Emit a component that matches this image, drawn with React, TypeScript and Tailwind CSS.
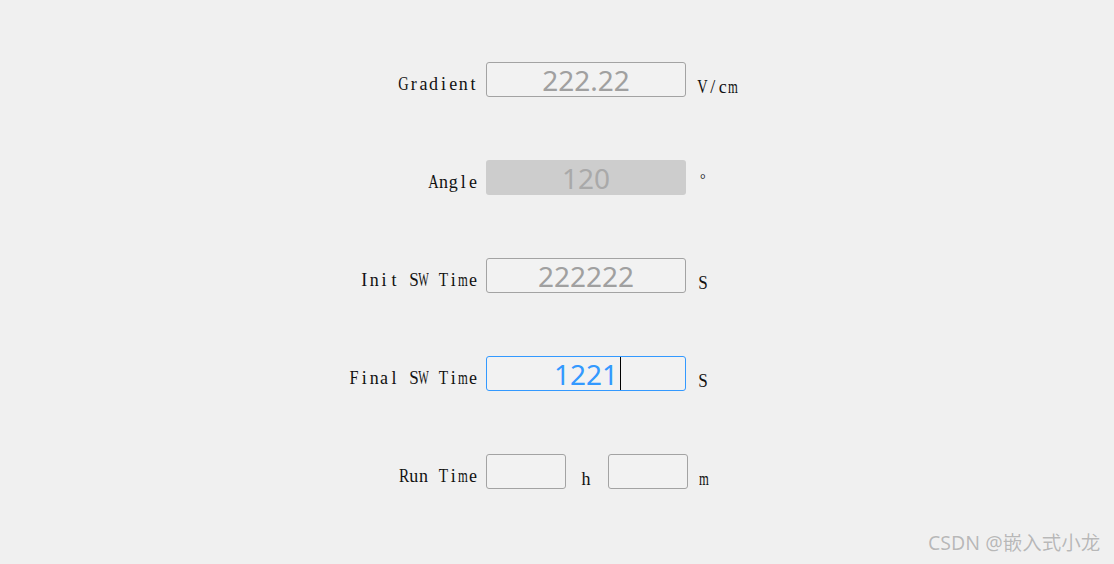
import React from "react";

const serif = { fontFamily: '"Liberation Serif", "DejaVu Serif", serif' };

const narrow: Record<string, string> = {
  W: "scale-x-[0.62]",
  m: "scale-x-[0.7]",
  M: "scale-x-[0.62]",
  T: "scale-x-[0.85]",
  S: "scale-x-[0.95]",
  V: "scale-x-[0.8]",
  G: "scale-x-[0.8]",
  A: "scale-x-[0.8]",
  R: "scale-x-[0.85]",
  F: "scale-x-[0.9]",
};

function Mono({ text }: { text: string }) {
  return (
    <span className="inline-flex">
      {text.split("").map((c, i) => (
        <span key={i} className="inline-flex w-[9.9px] justify-center">
          <span className={"inline-block " + (narrow[c] ?? "")}>{c === " " ? "\u00a0" : c}</span>
        </span>
      ))}
    </span>
  );
}

function Label({ text }: { text: string }) {
  return (
    <div
      className="w-[478px] flex justify-end text-[18px] text-[#111] leading-none whitespace-pre translate-y-[4px]"
      style={serif}
    >
      <Mono text={text} />
    </div>
  );
}

function Unit({ text, cls = "" }: { text: string; cls?: string }) {
  return (
    <div
      className={"text-[18px] text-[#111] leading-none whitespace-pre translate-y-[7px] " + cls}
      style={serif}
    >
      <Mono text={text} />
    </div>
  );
}

function Box({
  value,
  w = "w-[200px]",
  variant = "normal",
}: {
  value?: string;
  w?: string;
  variant?: "normal" | "disabled" | "focus";
}) {
  const base =
    "h-[35px] box-border rounded-[3px] flex items-center justify-center text-[28px] leading-none font-['Noto_Sans',sans-serif] ";
  const styles =
    variant === "disabled"
      ? "bg-[#cdcdcd] text-[#a9a9a9]"
      : variant === "focus"
      ? "bg-[#f2f2f2] border border-[#3399ff] text-[#3399ff]"
      : "bg-[#f2f2f2] border border-[#a3a3a3] text-[#a0a0a0]";
  return (
    <div className={base + styles + " " + w}>
      {value !== undefined && (
        <span className="relative">
          {value}
          {variant === "focus" && (
            <span className="absolute right-[-3px] top-[-3px] w-[1px] h-[33px] bg-black" />
          )}
        </span>
      )}
    </div>
  );
}

export default function App() {
  return (
    <div className="relative w-[1114px] h-[564px] bg-[#f0f0f0] overflow-hidden">
      <div className="flex flex-col gap-[63px] pt-[62px]">
        <div className="flex items-center">
          <Label text="Gradient" />
          <div className="ml-[8px]">
            <Box value="222.22" />
          </div>
          <Unit text="V/cm" cls="ml-[12px]" />
        </div>
        <div className="flex items-center">
          <Label text="Angle" />
          <div className="ml-[8px]">
            <Box value="120" variant="disabled" />
          </div>
          <div className="ml-[14px] text-[14px] text-[#111] leading-none translate-y-[2px]" style={serif}>
            °
          </div>
        </div>
        <div className="flex items-center">
          <Label text="Init SW Time" />
          <div className="ml-[8px]">
            <Box value="222222" />
          </div>
          <Unit text="S" cls="ml-[12px]" />
        </div>
        <div className="flex items-center">
          <Label text="Final SW Time" />
          <div className="ml-[8px]">
            <Box value="1221" variant="focus" />
          </div>
          <Unit text="S" cls="ml-[12px]" />
        </div>
        <div className="flex items-center">
          <Label text="Run Time" />
          <div className="ml-[8px]">
            <Box w="w-[80px]" />
          </div>
          <Unit text="h" cls="ml-[15px]" />
          <div className="ml-[17px]">
            <Box w="w-[80px]" />
          </div>
          <Unit text="m" cls="ml-[11px]" />
        </div>
      </div>
      <div
        className="absolute left-[928px] top-[533px] text-[19.5px] leading-none font-normal text-[#b8b8b8] whitespace-nowrap"
        style={{
          fontFamily: '"Noto Sans", "Noto Sans CJK SC", sans-serif',
          textShadow: "0 0 1px #ffffff",
        }}
      >
        CSDN @嵌入式小龙
      </div>
    </div>
  );
}
